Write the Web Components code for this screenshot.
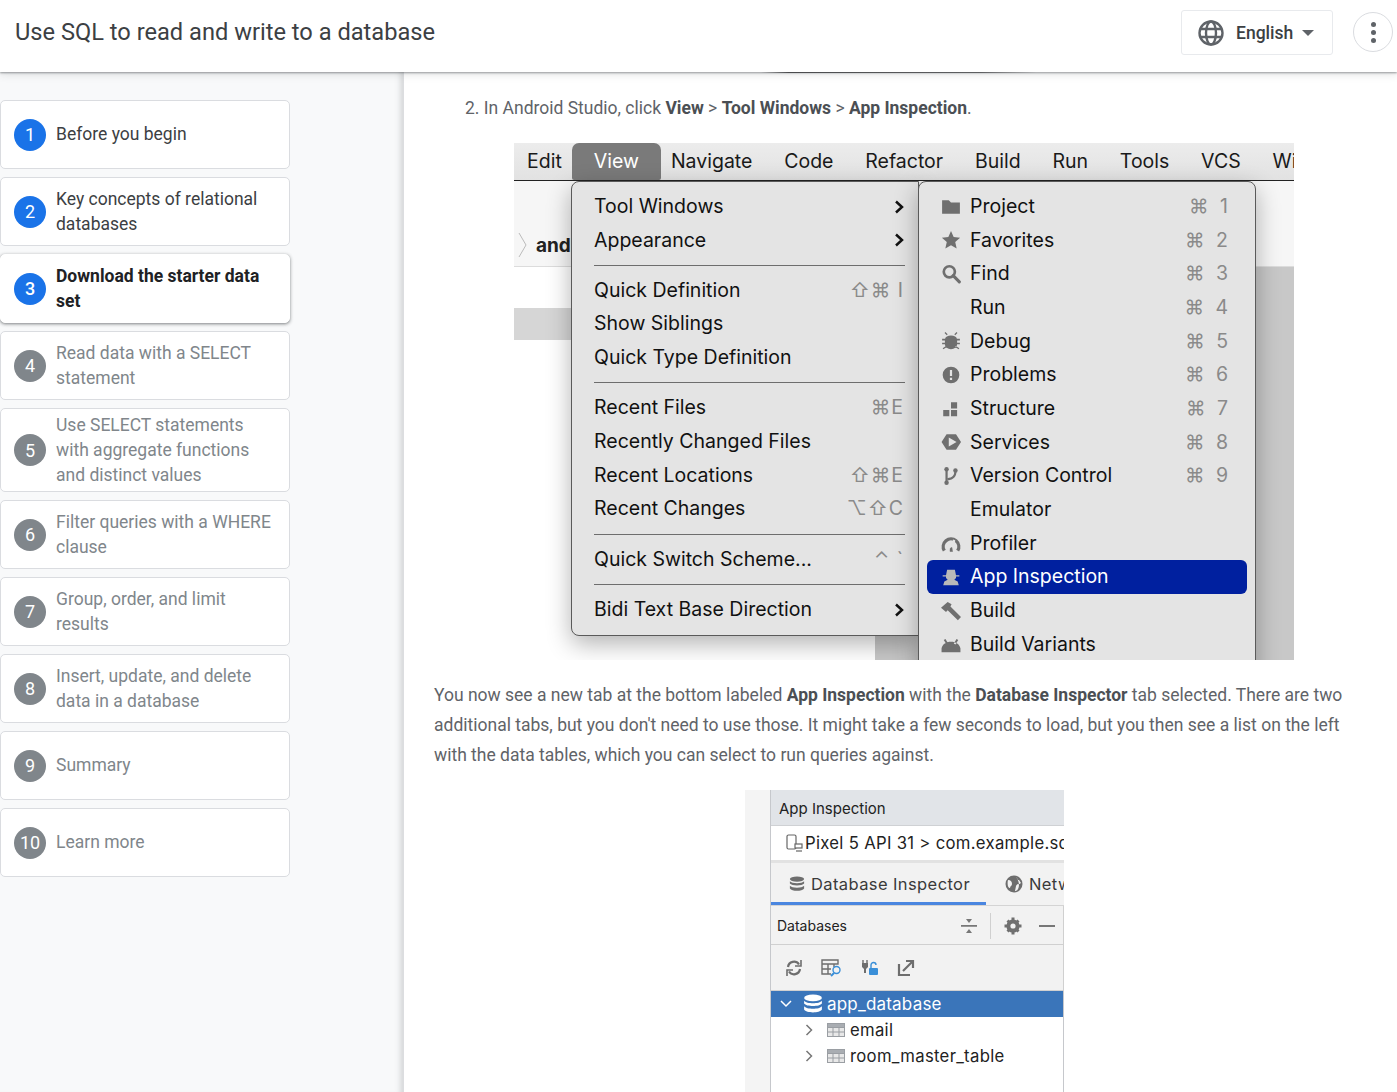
<!DOCTYPE html>
<html>
<head>
<meta charset="utf-8">
<title>Use SQL to read and write to a database</title>
<style>
html, body { margin: 0; padding: 0; height: 100%; overflow: hidden; }
body { font-family: Roboto, "Liberation Sans", sans-serif; background: #fff; }
</style>
</head>
<body>
<codelab-page>
    <codelab-header slot="header" title-text="Use SQL to read and write to a database"></codelab-header>
    <step-list slot="side">
        <step-card num="1" state="done">Before you begin</step-card>
        <step-card num="2" state="done">Key concepts of relational databases</step-card>
        <step-card num="3" state="active">Download the starter data set</step-card>
        <step-card num="4">Read data with a SELECT statement</step-card>
        <step-card num="5">Use SELECT statements with aggregate functions and distinct values</step-card>
        <step-card num="6">Filter queries with a WHERE clause</step-card>
        <step-card num="7">Group, order, and limit results</step-card>
        <step-card num="8">Insert, update, and delete data in a database</step-card>
        <step-card num="9">Summary</step-card>
        <step-card num="10">Learn more</step-card>
    </step-list>
    <codelab-content slot="main"></codelab-content>
</codelab-page>

<script>
const icons = {
    folder: `<path d="M1 3h6l2 2h8v10H1z"/>`,
    star: `<path d="M9 1l2.400 5.400 5.800.6-4.400 3.900 1.300 5.800L9 13.700l-5.100 3 1.300-5.800L.8 7l5.800-.6z"/>`,
    find: `<circle cx="7.500" cy="7" r="5" fill="none" stroke="currentColor" stroke-width="2.400"/><path d="M11 10.500l5.500 5.500" stroke="currentColor" stroke-width="2.800" stroke-linecap="round"/>`,
    bug: `<path d="M3.500 7.500C4 5 6 4 9 4s5 1 5.500 3.500V12a5.500 4.500 0 0 1-11 0zM1 7h3v1.500H1zM14 7h3v1.500h-3zM1 10.500h3V12H1zM14 10.500h3V12h-3zM1.500 15.500l3-2 .7 1-3 2zM16.500 15.500l-3-2-.7 1 3 2zM4 1l2 2-.8.8-2-2zM14 1l-2 2 .8.8 2-2z"/>`,
    problem: `<path fill-rule="evenodd" d="M9 1.500a7.500 7.500 0 1 0 0 15 7.500 7.500 0 0 0 0-15zM8 4.500h2v5.500H8zM8 11.500h2v2H8z"/>`,
    structure: `<path d="M9 3h5.500v5.500H9zM2 10h5.500v5.500H2zM9 10h5.500v5.500H9z"/>`,
    services: `<path fill-rule="evenodd" d="M5 2h8.500L18 9l-4.500 7H5L.5 9zM7 5v8l7-4z"/>`,
    vcs: `<circle cx="5" cy="3" r="2"/><circle cx="5" cy="15" r="2"/><circle cx="13" cy="4" r="2"/><path d="M4 3h2v12H4z"/><path d="M5.500 11c5-1 6.500-2 6.500-7h2c0 6-2.500 8-8 9z"/>`,
    profiler: `<path d="M3 15A7 7 0 1 1 15 15" fill="none" stroke="currentColor" stroke-width="3"/><path d="M8.500 16l2.300-11 2 .6L11.500 16z" fill="#e4e4e4"/><path d="M8 16a1.700 3 0 0 1 2-4l.7 4z"/>`,
    inspect: `<path d="M5.500 2.500h7l1 5h3v1h-3v1.500l-1.500 1.500 3 1.500 1 3.500H2l1-3.500 3-1.500L4.500 10V8.500h-3v-1h3z"/>`,
    hammer: `<path d="M0 6L6 1l3.500 2-1 2 9.500 9.500-2.800 2.800L6 8.300 4.500 9.800z"/>`,
    android: `<path d="M.5 15.500V12c1-4 4-6 8.500-6s7.500 2 8.500 6v3.500zM2.500 4.500L4 3.700l2.500 4-1.500.8zM15.500 4.500L14 3.700l-2.500 4 1.500.8z"/>`
};

class CodelabPage extends HTMLElement {
    constructor() {
        super();
        this.attachShadow({mode: "open"}).innerHTML = `
        <style>
            :host { display: grid; grid-template-columns: 404px 1fr; grid-template-rows: 72px 1fr; height: 1092px; overflow: hidden; }
            .top { grid-column: 1 / 3; position: relative; z-index: 3; }
            .side { background: #f8f9fa; box-shadow: inset -7px 0 6px -5px rgba(60,64,67,.22); border-right: 1px solid #dcdde0; }
            .main { overflow: hidden; min-width: 0; }
        </style>
        <div class="top"><slot name="header"></slot></div>
        <div class="side"><slot name="side"></slot></div>
        <div class="main"><slot name="main"></slot></div>`;
    }
}

class CodelabHeader extends HTMLElement {
    constructor() {
        super();
        this.attachShadow({mode: "open"}).innerHTML = `
        <style>
            :host { display: flex; align-items: center; height: 72px; box-sizing: border-box; padding: 0 4px 8px 15px; background: #fff; box-shadow: 0 1px 2px rgba(60,64,67,.5), 0 3px 8px rgba(60,64,67,.12); }
            h1 { flex: 1; margin: 0; padding-top: 1px; font: 400 23.650px/1 Roboto, sans-serif; color: #3c4043; }
            .lang { display: flex; align-items: center; box-sizing: border-box; width: 152px; height: 45px; padding-left: 16px; margin-top: 1px; border: 1px solid #e8eaed; border-radius: 3px; font: 500 17.500px Roboto, sans-serif; color: #3c4043; }
            .lang svg { margin-right: 12px; }
            .caret { width: 0; height: 0; margin-left: 9px; border: 6.500px solid transparent; border-top: 6.500px solid #5f6368; border-bottom: 0; }
            .more { display: flex; flex-direction: column; align-items: center; justify-content: center; gap: 3px; box-sizing: border-box; width: 40px; height: 40px; margin-left: 20px; border: 1px solid #dadce0; border-radius: 50%; }
            .more i { width: 5px; height: 5px; border-radius: 50%; background: #5f6368; }
        </style>
        <h1></h1>
        <div class="lang">
            <svg width="26" height="26" viewBox="0 0 26 26" fill="none" stroke="#5f6368" stroke-width="2.400">
                <circle cx="13" cy="13" r="11.500"/><ellipse cx="13" cy="13" rx="5" ry="11.500"/><path d="M2 9h22M2 17h22"/>
            </svg>
            English<span class="caret"></span>
        </div>
        <div class="more"><i></i><i></i><i></i></div>`;
        this.shadowRoot.querySelector("h1").textContent = this.getAttribute("title-text");
    }
}

class StepList extends HTMLElement {
    constructor() {
        super();
        this.attachShadow({mode: "open"}).innerHTML = `
        <style>
            :host { display: flex; flex-direction: column; gap: 8px; width: 290px; padding-top: 28px; }
        </style>
        <slot></slot>`;
    }
}

class StepCard extends HTMLElement {
    constructor() {
        super();
        this.attachShadow({mode: "open"}).innerHTML = `
        <style>
            :host { display: flex; align-items: center; box-sizing: border-box; min-height: 69px; padding: 3.500px 12px 3.500px 13px; background: #fff; border: 1px solid #dadce0; border-radius: 5px; font: 400 17.500px/25px Roboto, sans-serif; color: #80868b; }
            :host([state="done"]) { color: #3c4043; }
            :host([state="active"]) { color: #202124; font-weight: 700; border-color: #fff; box-shadow: 0 1px 3px rgba(60,64,67,.5), 0 1px 4px rgba(60,64,67,.2); }
            .num { flex: none; display: flex; align-items: center; justify-content: center; width: 32px; height: 32px; margin-right: 10px; border-radius: 50%; background: #80868b; color: #fff; font-weight: 400; font-size: 18px; }
            :host([state="done"]) .num, :host([state="active"]) .num { background: #1a73e8; }
            :host([state="active"]) .num { font-weight: 500; }
        </style>
        <span class="num">${this.getAttribute("num")}</span>
        <span><slot></slot></span>`;
    }
}

class MenuRow extends HTMLElement {
    constructor() {
        super();
        const icon = this.getAttribute("icon");
        const key = this.getAttribute("key");
        const arrow = this.hasAttribute("arrow");
        this.attachShadow({mode: "open"}).innerHTML = `
        <style>
            :host { display: flex; align-items: center; height: 33.700px; padding: 0 var(--row-right, 14px) 0 22px; color: #111; }
            :host([selected]) { background: #00209f; color: #fff; border-radius: 6px; margin: 0 8px; padding: 0 6px 0 14px; }
            .ic { flex: none; width: 20px; height: 20px; margin-right: 9px; color: #6f6f6f; }
            :host([selected]) .ic { color: #b9b9b9; }
            .t { flex: 1; white-space: nowrap; }
            .k { color: #8a8a8a; white-space: nowrap; word-spacing: var(--key-space, 0); letter-spacing: 1px; }
            svg { display: block; }
            .arr { width: 10px; height: 14px; }
        </style>
        ${this.hasAttribute("has-icon") ? `<span class="ic">${icon ? `<svg width="20" height="20" viewBox="0 0 18 18" fill="currentColor">${icons[icon]}</svg>` : ""}</span>` : ""}
        <span class="t"><slot></slot></span>
        ${key ? `<span class="k">${key}</span>` : ""}
        ${arrow ? `<svg class="arr" viewBox="0 0 10 14" fill="none" stroke="#111" stroke-width="2.500"><path d="M2 1.500L8 7l-6 5.500"/></svg>` : ""}`;
    }
}

class MenuSep extends HTMLElement {
    constructor() {
        super();
        this.attachShadow({mode: "open"}).innerHTML = `
        <style>
            :host { display: flex; align-items: center; height: 16.500px; padding: 0 13px 0 22px; }
            i { flex: 1; height: 1px; background: #6d6d6d; }
        </style>
        <i></i>`;
    }
}

class AndroidMenuShot extends HTMLElement {
    constructor() {
        super();
        const bar = ["Edit", "View", "Navigate", "Code", "Refactor", "Build", "Run", "Tools", "VCS", "Wi"];
        this.attachShadow({mode: "open"}).innerHTML = `
        <style>
            :host { display: block; position: relative; width: 780px; height: 517px; overflow: hidden; margin: 0 0 0 110px; font: 400 19.500px/1 Inter, "Liberation Sans", sans-serif; background: #fff; }
            .bar { display: flex; align-items: center; height: 37px; padding-left: 13px; border-bottom: 1.500px solid #222; background: linear-gradient(#ececec, #e2e2e2); color: #1a1a1a; white-space: nowrap; overflow: hidden; }
            .bar span { flex: none; line-height: 36px; margin-right: 31.800px; padding-bottom: 1px; }
            .bar .first { margin-right: 10px; }
            .bar .on { background: #7a7a7a; color: #fff; border-radius: 7px 7px 2px 2px; padding: 0 22px 1px; margin-right: 10px; }
            .tabs { height: 86px; background: #f6f6f6; border-bottom: 1px solid #dcdcdc; display: flex; align-items: center; padding-left: 4px; box-sizing: border-box; font-size: 19px; font-weight: 700; color: #222; padding-top: 43px; gap: 8px; }
            .band { height: 32px; margin-top: 41px; background: #d6d6d6; }
            .gray { position: absolute; left: 361px; right: 0; top: 124px; bottom: 0; background: #c8c8c8; }
            .menu { position: absolute; top: 38px; background: #e4e4e4; border: 1.500px solid #5a5a5a; box-sizing: border-box; padding-top: 7.800px; box-shadow: 0 8px 24px rgba(0,0,0,.3); }
            .m1 { left: 57px; width: 348px; height: 455px; border-radius: 8px 0 0 8px; }
            .m2 { left: 404px; width: 338px; height: 500px; border-radius: 8px 8px 0 0; --row-right: 26px; --key-space: 4px; }
        </style>
        <div class="bar">${bar.map(b => `<span class="${b === "View" ? "on" : b === "Edit" ? "first" : ""}">${b}</span>`).join("")}</div>
        <div class="tabs"><svg width="10" height="26" viewBox="0 0 10 26" fill="none" stroke="#bbb"><path d="M1 1l7 12-7 12"/></svg>and</div>
        <div class="band"></div>
        <div class="gray"></div>
        <div class="menu m1">
            <menu-row arrow>Tool Windows</menu-row>
            <menu-row arrow>Appearance</menu-row>
            <menu-sep></menu-sep>
            <menu-row key="⇧⌘ I">Quick Definition</menu-row>
            <menu-row>Show Siblings</menu-row>
            <menu-row>Quick Type Definition</menu-row>
            <menu-sep></menu-sep>
            <menu-row key="⌘E">Recent Files</menu-row>
            <menu-row>Recently Changed Files</menu-row>
            <menu-row key="⇧⌘E">Recent Locations</menu-row>
            <menu-row key="⌥⇧C">Recent Changes</menu-row>
            <menu-sep></menu-sep>
            <menu-row key="⌃ \`">Quick Switch Scheme...</menu-row>
            <menu-sep></menu-sep>
            <menu-row arrow>Bidi Text Base Direction</menu-row>
        </div>
        <div class="menu m2">
            <menu-row has-icon icon="folder" key="⌘ 1">Project</menu-row>
            <menu-row has-icon icon="star" key="⌘ 2">Favorites</menu-row>
            <menu-row has-icon icon="find" key="⌘ 3">Find</menu-row>
            <menu-row has-icon key="⌘ 4">Run</menu-row>
            <menu-row has-icon icon="bug" key="⌘ 5">Debug</menu-row>
            <menu-row has-icon icon="problem" key="⌘ 6">Problems</menu-row>
            <menu-row has-icon icon="structure" key="⌘ 7">Structure</menu-row>
            <menu-row has-icon icon="services" key="⌘ 8">Services</menu-row>
            <menu-row has-icon icon="vcs" key="⌘ 9">Version Control</menu-row>
            <menu-row has-icon>Emulator</menu-row>
            <menu-row has-icon icon="profiler">Profiler</menu-row>
            <menu-row has-icon icon="inspect" selected>App Inspection</menu-row>
            <menu-row has-icon icon="hammer">Build</menu-row>
            <menu-row has-icon icon="android">Build Variants</menu-row>
        </div>`;
    }
}

class InspectorShot extends HTMLElement {
    constructor() {
        super();
        const table = `<svg width="18" height="14" viewBox="0 0 18 14" fill="#e8e8e8" stroke="#9a9ea3"><rect x=".5" y=".5" width="17" height="13"/><path d="M.5 4.500h17M.5 9h17M6 4.500V13.500M12 4.500V13.500" fill="none"/><rect x=".5" y=".5" width="17" height="4" fill="#a9adb2"/></svg>`;
        const chev = `<svg width="8" height="12" viewBox="0 0 8 12" fill="none" stroke="#777" stroke-width="1.500"><path d="M1.500 1l5 5-5 5"/></svg>`;
        const db = (c, s) => `<svg width="${s}" height="${s}" viewBox="0 0 18 18" fill="${c}"><ellipse cx="9" cy="3.500" rx="8" ry="3"/><path d="M1 6c2 3 14 3 16 0v2.500c-2 3-14 3-16 0zM1 11c2 3 14 3 16 0v3c-2 3.500-14 3.500-16 0z"/></svg>`;
        this.attachShadow({mode: "open"}).innerHTML = `
        <style>
            :host { display: flex; width: 319px; height: 302px; margin: 20px 0 0 341px; font: 400 15.500px/1 Inter, "Liberation Sans", sans-serif; color: #222; background: #f4f4f4; overflow: hidden; }
            .pane { margin-left: 25px; width: 294px; box-sizing: border-box; border-left: 1.500px solid #c6c8cc; background: #fff; overflow: hidden; }
            .row { display: flex; align-items: center; white-space: nowrap; box-sizing: border-box; }
            svg { flex: none; }
            .head { height: 36px; padding: 1px 0 0 8px; background: #e1e4e8; border-bottom: 1px solid #cfd1d4; font-size: 15px; }
            .dev { height: 37px; padding-left: 15px; border-bottom: 3px solid #e2e2e2; font-size: 16.700px; letter-spacing: .3px; gap: 1px; }
            .tabs { height: 43px; background: #f2f2f2; border-bottom: 1px solid #d4d4d4; color: #3a3a3a; font-size: 16.500px; letter-spacing: .4px; position: relative; padding-left: 18px; gap: 6px; }
            .tabs::after { content: ""; position: absolute; left: 0; bottom: 0; width: 215px; height: 3px; background: #4a86e0; }
            .tabs .net { margin-left: 29px; display: flex; gap: 6px; align-items: center; }
            .db { height: 39px; background: #f2f2f2; border-bottom: 1px solid #d0d0d0; padding: 2px 0 0 6px; font-size: 14px; color: #222; border-right: 1px solid #d0d0d0; }
            .db .sp { flex: 1; }
            .tools { height: 46px; background: #f2f2f2; border-bottom: 1px solid #d0d0d0; padding-left: 14px; gap: 18px; border-right: 1px solid #d0d0d0; }
            .sel { height: 26px; background: #3a75ba; color: #fff; padding-left: 9px; font-size: 17px; letter-spacing: .2px; }
            .item { height: 26px; padding-left: 34px; font-size: 16.700px; letter-spacing: .3px; }
            .tb { margin: 0 5px 0 14px; display: flex; }
            .rest { height: 40px; border-right: 1px solid #c6c8cc; }
            .item, .sel { border-right: 1px solid #c6c8cc; }
        </style>
        <div class="pane">
            <div class="row head">App Inspection</div>
            <div class="row dev">
                <svg width="18" height="20" viewBox="0 0 18 20" fill="none" stroke="#666" stroke-width="1.200"><rect x="1" y="2" width="9" height="14" rx="1.500"/><rect x="9" y="11" width="7" height="4" fill="#fff"/><path d="M10 18h6"/></svg>
                Pixel 5 API 31 &gt; com.example.sql
            </div>
            <div class="row tabs">
                ${db("#6e6e6e", 16)}Database Inspector
                <span class="net"><svg width="18" height="18" viewBox="0 0 18 18"><circle cx="9" cy="9" r="8.500" fill="#6e6e6e"/><path d="M3 5c3 0 4 2 4 4s-2 2-2 4c-2 0-3-4-2-8zM11 2c2 1 1 3 3 3l2 3c-2 2-4 0-5 3l-1 5c4 0 6-8 1-14z" fill="#f2f2f2"/></svg>Network</span>
            </div>
            <div class="row db">
                Databases<span class="sp"></span>
                <svg width="16" height="18" viewBox="0 0 16 18" fill="#777"><path d="M0 8h16v1.800H0zM5 2h6L8 6zM5 16h6l-3-4z"/></svg>
                <span style="width:1px;height:26px;background:#d0d0d0;margin:0 13px 0 13px"></span>
                <svg width="18" height="18" viewBox="0 0 18 18"><circle cx="9" cy="9" r="4.600" fill="none" stroke="#707070" stroke-width="4"/><path d="M7.500 .5h3v3h-3zM7.500 14.500h3v3h-3zM.5 7.500h3v3h-3zM14.500 7.500h3v3h-3zM2.500 4.500l2-2 2 2-2 2zM11.500 4.500l2-2 2 2-2 2zM2.500 13.500l2-2 2 2-2 2zM11.500 13.500l2-2 2 2-2 2z" fill="#707070"/></svg>
                <span style="width:16px;height:2.500px;background:#777;margin:0 8px 0 17px"></span>
            </div>
            <div class="row tools">
                <svg width="18" height="18" viewBox="0 0 18 18" fill="none" stroke="#6e6e6e" stroke-width="2.200"><path d="M3 8a6 6 0 0 1 11-2.500M15 10a6 6 0 0 1-11 2.500"/><path d="M16 1v6h-6M2 17v-6h6" stroke-width="1.600"/></svg>
                <svg width="22" height="18" viewBox="0 0 22 18" fill="none" stroke="#6e6e6e" stroke-width="1.400"><path d="M1 1h16v4H1zM1 5v10h9M7 5v10M13 5v3M1 10h9"/><circle cx="15.500" cy="11" r="3.500" stroke="#3a8fd8"/><path d="M13 14l-3 3" stroke="#3a8fd8" stroke-width="2"/></svg>
                <svg width="18" height="18" viewBox="0 0 18 18"><path d="M2 1v3M6 1v3" stroke="#6e6e6e" stroke-width="1.400"/><path d="M1 4h6v4l-2 2v4H3v-4L1 8z" fill="#6e6e6e"/><rect x="8" y="9" width="9" height="7" rx="1" fill="#3a8fd8"/><path d="M10 9V6a2.500 2.500 0 0 1 5 0" fill="none" stroke="#3a8fd8" stroke-width="1.400"/></svg>
                <svg width="18" height="18" viewBox="0 0 18 18" fill="none" stroke="#6e6e6e" stroke-width="2.200"><path d="M2 5v11h11M6 12L16 2M9 2h7v7"/></svg>
            </div>
            <div class="row sel">
                <svg width="12" height="8" viewBox="0 0 12 8" fill="none" stroke="#fff" stroke-width="1.500" style="margin-right:11px"><path d="M1 1l5 5 5-5"/></svg>
                ${db("#fff", 20)}<span style="margin-left:4px">app_database</span>
            </div>
            <div class="row item">${chev}<span class="tb">${table}</span>email</div>
            <div class="row item">${chev}<span class="tb">${table}</span>room_master_table</div>
            <div class="rest"></div>
        </div>`;
    }
}

class CodelabContent extends HTMLElement {
    constructor() {
        super();
        this.attachShadow({mode: "open"}).innerHTML = `
        <style>
            :host { display: block; position: relative; height: 100%; font: 400 17.500px/30px Roboto, sans-serif; color: #5f6368; }
            b { font-weight: 700; color: #4b4f54; }
            .edge { height: 1px; width: 275px; margin-left: 357px; background: linear-gradient(90deg, transparent, #555 10%, #777 80%, transparent); }
            .step { margin: 20px 0 20px 61px; }
            .body { margin: 20px 30px 0; width: 925px; }
        </style>
        <div class="edge"></div>
        <div class="step">2. In Android Studio, click <b>View</b> &gt; <b>Tool Windows</b> &gt; <b>App Inspection</b>.</div>
        <android-menu-shot></android-menu-shot>
        <div class="body">You now see a new tab at the bottom labeled <b>App Inspection</b> with the <b>Database Inspector</b> tab selected. There are two additional tabs, but you don't need to use those. It might take a few seconds to load, but you then see a list on the left with the data tables, which you can select to run queries against.</div>
        <inspector-shot></inspector-shot>`;
    }
}

window.customElements.define("codelab-page", CodelabPage);
window.customElements.define("codelab-header", CodelabHeader);
window.customElements.define("step-list", StepList);
window.customElements.define("step-card", StepCard);
window.customElements.define("menu-row", MenuRow);
window.customElements.define("menu-sep", MenuSep);
window.customElements.define("android-menu-shot", AndroidMenuShot);
window.customElements.define("inspector-shot", InspectorShot);
window.customElements.define("codelab-content", CodelabContent);
</script>
</body>
</html>
